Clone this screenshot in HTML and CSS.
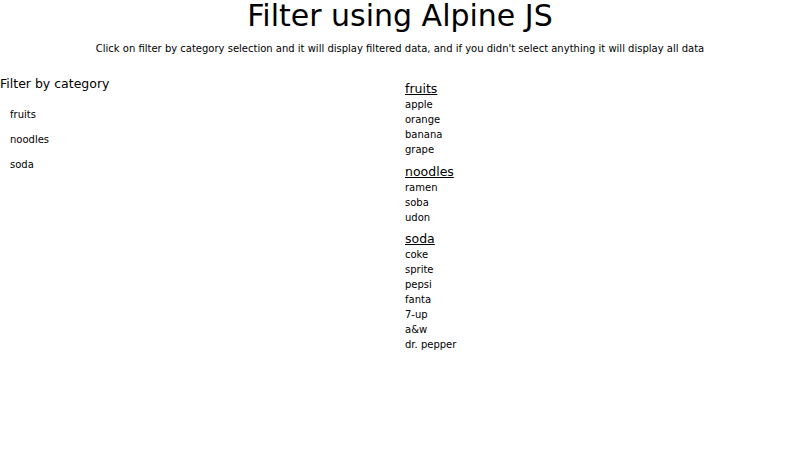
FILE: index.html
```html
<!DOCTYPE html>
<html lang="en">
<head>
  <meta charset="UTF-8">
  <meta name="viewport" content="width=device-width, initial-scale=1.0">
  <title>Filter using Alpine JS</title>
  <link rel="stylesheet" href="styles.css">
</head>
<body>
  <header class="top">
    <h1>Filter using Alpine JS</h1>
    <p>Click on filter by category selection and it will display filtered data, and if you didn't select anything it will display all data</p>
  </header>

  <div class="layout">
    <aside class="filters">
      <h3>Filter by category</h3>
      <ul>
        <li>fruits</li>
        <li>noodles</li>
        <li>soda</li>
      </ul>
    </aside>

    <section class="results">
      <div class="group">
        <h4>fruits</h4>
        <ul>
          <li>apple</li>
          <li>orange</li>
          <li>banana</li>
          <li>grape</li>
        </ul>
      </div>
      <div class="group">
        <h4>noodles</h4>
        <ul>
          <li>ramen</li>
          <li>soba</li>
          <li>udon</li>
        </ul>
      </div>
      <div class="group">
        <h4>soda</h4>
        <ul>
          <li>coke</li>
          <li>sprite</li>
          <li>pepsi</li>
          <li>fanta</li>
          <li>7-up</li>
          <li>a&amp;w</li>
          <li>dr. pepper</li>
        </ul>
      </div>
    </section>
  </div>
</body>
</html>
```

FILE: styles.css
```css
* { box-sizing: border-box; margin: 0; padding: 0; }
body {
  font-family: 'DejaVu Sans', sans-serif;
  color: #000;
  background: #fff;
}
.top {
  text-align: center;
}
.top h1 {
  font-size: 30px;
  font-weight: normal;
  line-height: 31px;
}
.top p {
  font-size: 10px;
  line-height: 13px;
  margin-top: 11px;
}
.layout {
  display: grid;
  grid-template-columns: 1fr 1fr;
  margin-top: 20px;
}
.filters h3 {
  font-size: 12.5px;
  font-weight: normal;
  line-height: 16px;
  padding-top: 1px;
}
ul { list-style: none; }
.filters ul {
  padding: 16px 10px 0;
}
.filters li {
  font-size: 10px;
  height: 25px;
  line-height: 13px;
}
.results {
  padding: 5px 5px 0;
}
.group { margin-bottom: 5.5px; }
.group h4 {
  font-size: 12.5px;
  font-weight: normal;
  text-decoration: underline;
  line-height: 17px;
}
.group li {
  font-size: 10px;
  line-height: 15px;
}
```
